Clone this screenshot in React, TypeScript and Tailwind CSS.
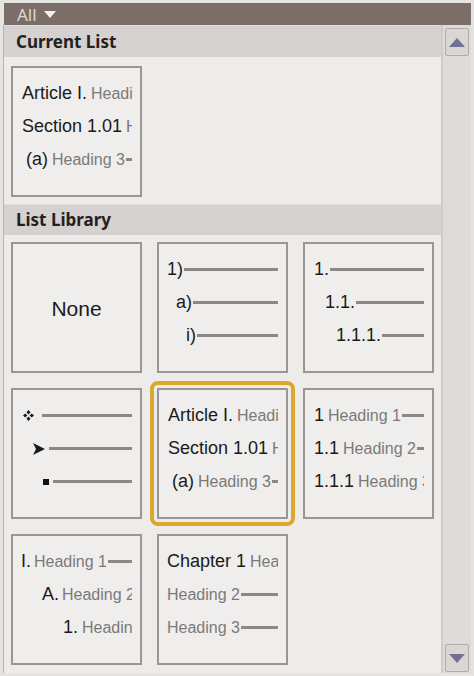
import React from 'react';

const dark = 'text-[#1a1a1a] text-[18px]';
const gray = 'text-[#7b7a79] text-[16px]';

const Line = () => <span className="flex-1 h-[3px] bg-[#8b8886] ml-[1px] min-w-[8px]" />;

const Row = ({ pl, children }: { pl: string; children: React.ReactNode }) => (
  <div className={`h-[33px] flex items-center whitespace-nowrap ${pl}`}>{children}</div>
);

const Tile = ({ children, selected = false }: { children?: React.ReactNode; selected?: boolean }) => (
  <div
    className={`w-[131px] h-[131px] border-2 border-[#999694] bg-[#efeeec] ${
      selected ? 'outline-[4px] outline-solid outline-[#d9a82c] outline-offset-[3px] rounded-[1px]' : ''
    }`}
  >
    <div className="mx-[8px] mt-[9px] overflow-hidden">{children}</div>
  </div>
);

const ArticleTile = ({ selected }: { selected?: boolean }) => (
  <Tile selected={selected}>
    <Row pl="pl-[1px]">
      <span className={dark}>Article I.</span>
      <span className={`${gray} ml-[4px]`}>Heading 1</span>
    </Row>
    <Row pl="pl-[1px]">
      <span className={dark}>Section 1.01</span>
      <span className={`${gray} ml-[4px]`}>Heading 2</span>
    </Row>
    <Row pl="pl-[5px]">
      <span className={dark}>(a)</span>
      <span className={`${gray} ml-[4px]`}>Heading 3</span>
      <Line />
    </Row>
  </Tile>
);

const Diamonds = () => (
  <svg width="11" height="11" viewBox="0 0 11 11" className="shrink-0">
    <path d="M5.5 0L7.5 2.2L5.5 4.4L3.5 2.2Z M5.5 6.6L7.5 8.8L5.5 11L3.5 8.8Z M0 5.5L2.2 3.5L4.4 5.5L2.2 7.5Z M6.6 5.5L8.8 3.5L11 5.5L8.8 7.5Z" fill="#1a1a1a" />
  </svg>
);

const Arrow = () => (
  <svg width="12" height="12" viewBox="0 0 12 12" className="shrink-0">
    <path d="M0 0L12 6L0 12L3 6Z" fill="#1a1a1a" />
  </svg>
);

const Header = ({ title }: { title: string }) => (
  <div className="bg-[#d4d1d0] border-t border-[#e2dfde] flex items-center pl-[12px] font-['Noto_Sans',sans-serif] font-bold text-[17px] text-[#232120]">
    {title}
  </div>
);

const ScrollButton = ({ up }: { up: boolean }) => (
  <div className="h-[28px] mx-[2px] bg-[#d9d6d4] border border-[#aeaba9] rounded-[2px] flex items-center justify-center">
    <svg width="16" height="9" viewBox="0 0 16 9">
      <path d={up ? 'M0 9L8 0L16 9Z' : 'M0 0L16 0L8 9Z'} fill="#727192" />
    </svg>
  </div>
);

export default function App() {
  return (
    <div className="w-[474px] h-[676px] bg-[#e6e4e2] p-[3px] flex flex-col font-['Liberation_Sans',Arial,sans-serif] overflow-hidden">
      <div className="h-[22px] bg-[#7b6e68] flex items-center pl-[13px] shrink-0 ml-[1px]">
        <span className="font-['Noto_Sans',sans-serif] text-[17px] text-[#dcd8d6] leading-none">All</span>
        <svg width="12" height="7" viewBox="0 0 12 7" className="ml-[7px]">
          <path d="M0 0L12 0L6 7Z" fill="#f4f2f0" />
        </svg>
      </div>
      <div className="flex-1 flex min-h-0 border-l-[1px] border-[#b9b6b4]">
        <div className="flex-1 flex flex-col bg-[#eeecea] min-w-0">
          <div className="h-[32px] grid">
            <Header title="Current List" />
          </div>
          <div className="h-[147px] pl-[7px] pt-[9px]">
            <ArticleTile />
          </div>
          <div className="h-[31px] grid">
            <Header title="List Library" />
          </div>
          <div className="pl-[7px] pt-[7px] grid grid-cols-[131px_131px_131px] gap-x-[15px] gap-y-[15px]">
            <Tile>
              <div className="h-[111px] flex items-center justify-center text-[21px] text-[#1a1a1a]">
                None
              </div>
            </Tile>
            <Tile>
              <Row pl="pl-[0px]">
                <span className={dark}>1)</span>
                <Line />
              </Row>
              <Row pl="pl-[9px]">
                <span className={dark}>a)</span>
                <Line />
              </Row>
              <Row pl="pl-[19px]">
                <span className={dark}>i)</span>
                <Line />
              </Row>
            </Tile>
            <Tile>
              <Row pl="pl-[1px]">
                <span className={dark}>1.</span>
                <Line />
              </Row>
              <Row pl="pl-[12px]">
                <span className={dark}>1.1.</span>
                <Line />
              </Row>
              <Row pl="pl-[23px]">
                <span className={dark}>1.1.1.</span>
                <Line />
              </Row>
            </Tile>
            <Tile>
              <Row pl="pl-[2px]">
                <Diamonds />
                <span className="w-[7px]" />
                <Line />
              </Row>
              <Row pl="pl-[12px]">
                <Arrow />
                <span className="w-[3px]" />
                <Line />
              </Row>
              <Row pl="pl-[22px]">
                <span className="w-[6px] h-[6px] bg-[#111] shrink-0" />
                <span className="w-[3px]" />
                <Line />
              </Row>
            </Tile>
            <ArticleTile selected />
            <Tile>
              <Row pl="pl-[1px]">
                <span className={dark}>1</span>
                <span className={`${gray} ml-[4px]`}>Heading 1</span>
                <Line />
              </Row>
              <Row pl="pl-[1px]">
                <span className={dark}>1.1</span>
                <span className={`${gray} ml-[4px]`}>Heading 2</span>
                <Line />
              </Row>
              <Row pl="pl-[1px]">
                <span className={dark}>1.1.1</span>
                <span className={`${gray} ml-[4px]`}>Heading 3</span>
                <Line />
              </Row>
            </Tile>
            <Tile>
              <Row pl="pl-[0px]">
                <span className={dark}>I.</span>
                <span className={`${gray} ml-[3px]`}>Heading 1</span>
                <Line />
              </Row>
              <Row pl="pl-[21px]">
                <span className={dark}>A.</span>
                <span className={`${gray} ml-[3px]`}>Heading 2</span>
              </Row>
              <Row pl="pl-[42px]">
                <span className={dark}>1.</span>
                <span className={`${gray} ml-[4px]`}>Heading 3</span>
              </Row>
            </Tile>
            <Tile>
              <Row pl="pl-[0px]">
                <span className={dark}>Chapter 1</span>
                <span className={`${gray} ml-[4px]`}>Heading 1</span>
              </Row>
              <Row pl="pl-[0px]">
                <span className={gray}>Heading 2</span>
                <Line />
              </Row>
              <Row pl="pl-[0px]">
                <span className={gray}>Heading 3</span>
                <Line />
              </Row>
            </Tile>
          </div>
        </div>
        <div className="w-[30px] bg-[#dedcda] border-l-2 border-[#cfccca] flex flex-col justify-between pt-[3px] pb-[1px]">
          <ScrollButton up />
          <ScrollButton up={false} />
        </div>
      </div>
    </div>
  );
}
